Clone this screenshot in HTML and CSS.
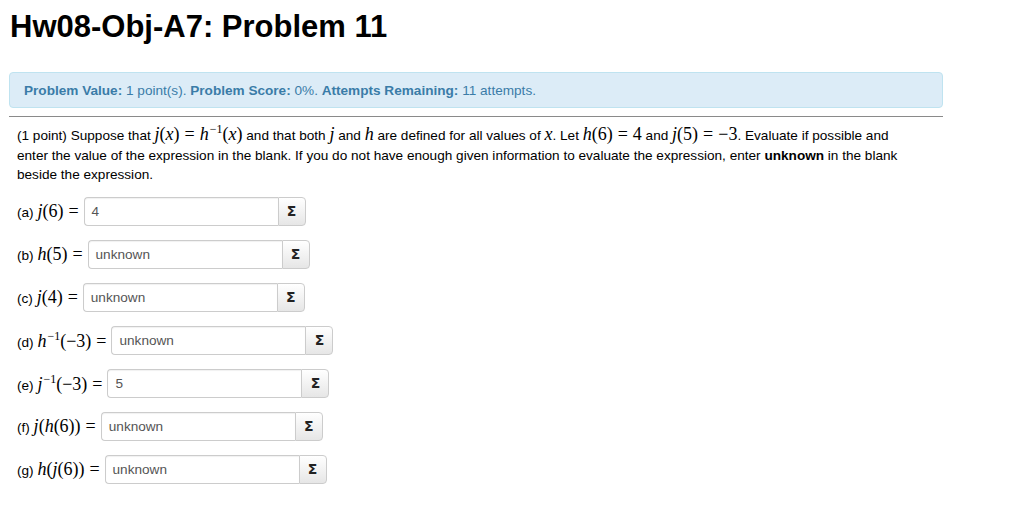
FILE: index.html
```html
<!DOCTYPE html>
<html>
<head>
<meta charset="utf-8">
<link rel="stylesheet" href="styles.css">
</head>
<body>
<div class="page">
  <h1 class="title">Hw08-Obj-A7: Problem 11</h1>
  <div class="alert">
    <b>Problem Value:</b> 1 point(s). <b>Problem Score:</b> 0%. <b>Attempts Remaining:</b> 11 attempts.
  </div>
  <div class="rule"></div>
  <div class="problem">
    <p class="text">(1 point) Suppose that <span class="m"><i>j</i>(<i>x</i>)<span class="eq">=</span><i>h</i><sup>−1</sup>(<i>x</i>)</span> and that both <span class="m"><i>j</i></span> and <span class="m"><i>h</i></span> are defined for all values of <span class="m"><i>x</i></span>. Let <span class="m"><i>h</i>(6)<span class="eq">=</span>4</span> and <span class="m"><i>j</i>(5)<span class="eq">=</span>−3</span>. Evaluate if possible and enter the value of the expression in the blank. If you do not have enough given information to evaluate the expression, enter <b>unknown</b> in the blank beside the expression.</p>

    <div class="row">
      <span class="lbl">(a) <span class="m"><i>j</i>(6)<span class="eq">=</span></span></span>
      <span class="field"><span class="inp">4</span><span class="sig">Σ</span></span>
    </div>
    <div class="row">
      <span class="lbl">(b) <span class="m"><i>h</i>(5)<span class="eq">=</span></span></span>
      <span class="field"><span class="inp">unknown</span><span class="sig">Σ</span></span>
    </div>
    <div class="row">
      <span class="lbl">(c) <span class="m"><i>j</i>(4)<span class="eq">=</span></span></span>
      <span class="field"><span class="inp">unknown</span><span class="sig">Σ</span></span>
    </div>
    <div class="row">
      <span class="lbl">(d) <span class="m"><i>h</i><sup>−1</sup>(−3)<span class="eq">=</span></span></span>
      <span class="field"><span class="inp">unknown</span><span class="sig">Σ</span></span>
    </div>
    <div class="row">
      <span class="lbl">(e) <span class="m"><i>j</i><sup>−1</sup>(−3)<span class="eq">=</span></span></span>
      <span class="field"><span class="inp">5</span><span class="sig">Σ</span></span>
    </div>
    <div class="row">
      <span class="lbl">(f) <span class="m"><i>j</i>(<i>h</i>(6))<span class="eq">=</span></span></span>
      <span class="field"><span class="inp">unknown</span><span class="sig">Σ</span></span>
    </div>
    <div class="row">
      <span class="lbl">(g) <span class="m"><i>h</i>(<i>j</i>(6))<span class="eq">=</span></span></span>
      <span class="field"><span class="inp">unknown</span><span class="sig">Σ</span></span>
    </div>
  </div>
</div>
</body>
</html>
```

FILE: styles.css
```css
html, body {
  margin: 0;
  padding: 0;
  background: #ffffff;
}
body {
  font-family: "Liberation Sans", Arial, sans-serif;
  color: #000;
}
.page {
  padding: 0 81px 0 9px;
}
.title {
  font-size: 31px;
  font-weight: bold;
  margin: 0;
  padding: 9px 0 0 1px;
  line-height: 36px;
  height: 36px;
  color: #000;
}
.alert {
  margin-top: 27px;
  height: 34px;
  background: #dcecf7;
  border: 1px solid #bfe3f0;
  border-radius: 4px;
  color: #3a7ca8;
  font-size: 13.6px;
  line-height: 35px;
  padding-left: 14px;
  box-sizing: content-box;
}
.alert b {
  color: #3a7ca8;
}
.rule {
  margin-top: 8px;
  border-top: 1px solid #8a8a8a;
}
.problem {
  padding-left: 8px;
  font-size: 13.6px;
}
.text {
  margin: 6px 0 0 0;
  line-height: 19.5px;
  max-width: 892px;
}
.m {
  font-family: "Liberation Serif", "Times New Roman", serif;
  font-size: 18px;
  line-height: 1;
}
.m i {
  font-style: italic;
}
.eq {
  margin: 0 5px;
}
.m sup {
  font-size: 12px;
  vertical-align: 7px;
  line-height: 1;
  margin-left: 1px;
}
.row {
  display: flex;
  align-items: center;
  height: 29px;
  margin-top: 14px;
}
.text + .row {
  margin-top: 12px;
}
.lbl {
  white-space: nowrap;
  margin-right: 5px;
}
.lbl .eq {
  margin-right: 0;
}
.field {
  display: flex;
  height: 29px;
}
.inp {
  width: 186px;
  height: 27px;
  border: 1px solid #cccccc;
  border-right: none;
  border-radius: 4px 0 0 4px;
  color: #555555;
  font-size: 13.6px;
  line-height: 28px;
  padding-left: 7px;
  box-shadow: inset 0 1px 1px rgba(0,0,0,0.06);
}
.sig {
  width: 26px;
  height: 27px;
  border: 1px solid #cccccc;
  border-radius: 0 4px 4px 0;
  background: linear-gradient(#ffffff, #e6e6e6);
  font-family: "DejaVu Sans", sans-serif;
  font-weight: bold;
  font-size: 14px;
  line-height: 27px;
  text-align: center;
  color: #222;
}
```
